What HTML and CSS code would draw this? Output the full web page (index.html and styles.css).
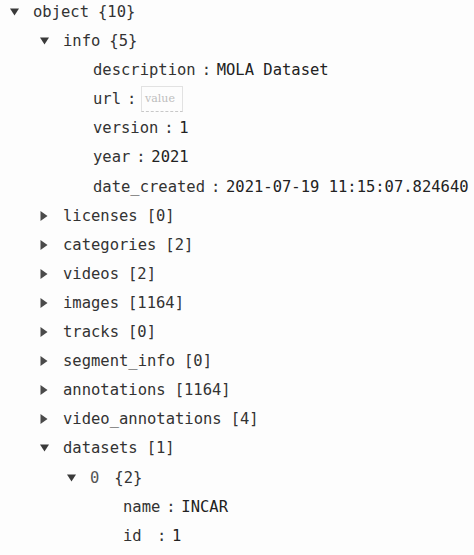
FILE: index.html
```html
<!DOCTYPE html>
<html>
<head>
<meta charset="utf-8">
<link rel="stylesheet" href="styles.css">
</head>
<body>
<div class="tree">
  <div class="node">
    <div class="row"><span class="tog"><svg width="9" height="8" viewBox="0 0 9 8"><polygon points="0,0.5 9,0.5 4.5,7.5" fill="#3a3a3a"/></svg></span><span class="k">object</span><span class="meta">{10}</span></div>
    <div class="kids">
      <div class="node">
        <div class="row"><span class="tog"><svg width="9" height="8" viewBox="0 0 9 8"><polygon points="0,0.5 9,0.5 4.5,7.5" fill="#3a3a3a"/></svg></span><span class="k">info</span><span class="meta">{5}</span></div>
        <div class="kids">
          <div class="row leaf"><span class="k">description</span><span class="c">:</span><span class="v">MOLA Dataset</span></div>
          <div class="row leaf"><span class="k">url</span><span class="c">:</span><span class="ph">value</span></div>
          <div class="row leaf"><span class="k">version</span><span class="c">:</span><span class="v">1</span></div>
          <div class="row leaf"><span class="k">year</span><span class="c">:</span><span class="v">2021</span></div>
          <div class="row leaf"><span class="k">date_created</span><span class="c">:</span><span class="v">2021-07-19 11:15:07.824640</span></div>
        </div>
      </div>
      <div class="row"><span class="tog"><svg width="8" height="10" viewBox="0 0 8 10"><polygon points="0.5,0 7.5,5 0.5,10" fill="#4a4a4a"/></svg></span><span class="k">licenses</span><span class="meta">[0]</span></div>
      <div class="row"><span class="tog"><svg width="8" height="10" viewBox="0 0 8 10"><polygon points="0.5,0 7.5,5 0.5,10" fill="#4a4a4a"/></svg></span><span class="k">categories</span><span class="meta">[2]</span></div>
      <div class="row"><span class="tog"><svg width="8" height="10" viewBox="0 0 8 10"><polygon points="0.5,0 7.5,5 0.5,10" fill="#4a4a4a"/></svg></span><span class="k">videos</span><span class="meta">[2]</span></div>
      <div class="row"><span class="tog"><svg width="8" height="10" viewBox="0 0 8 10"><polygon points="0.5,0 7.5,5 0.5,10" fill="#4a4a4a"/></svg></span><span class="k">images</span><span class="meta">[1164]</span></div>
      <div class="row"><span class="tog"><svg width="8" height="10" viewBox="0 0 8 10"><polygon points="0.5,0 7.5,5 0.5,10" fill="#4a4a4a"/></svg></span><span class="k">tracks</span><span class="meta">[0]</span></div>
      <div class="row"><span class="tog"><svg width="8" height="10" viewBox="0 0 8 10"><polygon points="0.5,0 7.5,5 0.5,10" fill="#4a4a4a"/></svg></span><span class="k">segment_info</span><span class="meta">[0]</span></div>
      <div class="row"><span class="tog"><svg width="8" height="10" viewBox="0 0 8 10"><polygon points="0.5,0 7.5,5 0.5,10" fill="#4a4a4a"/></svg></span><span class="k">annotations</span><span class="meta">[1164]</span></div>
      <div class="row"><span class="tog"><svg width="8" height="10" viewBox="0 0 8 10"><polygon points="0.5,0 7.5,5 0.5,10" fill="#4a4a4a"/></svg></span><span class="k">video_annotations</span><span class="meta">[4]</span></div>
      <div class="node">
        <div class="row"><span class="tog"><svg width="9" height="8" viewBox="0 0 9 8"><polygon points="0,0.5 9,0.5 4.5,7.5" fill="#3a3a3a"/></svg></span><span class="k">datasets</span><span class="meta">[1]</span></div>
        <div class="kids">
          <div class="node">
            <div class="row sub"><span class="tog"><svg width="9" height="8" viewBox="0 0 9 8"><polygon points="0,0.5 9,0.5 4.5,7.5" fill="#3a3a3a"/></svg></span><span class="k idx">0</span><span class="meta wide">{2}</span></div>
            <div class="kids">
              <div class="row leaf"><span class="k">name</span><span class="c">:</span><span class="v">INCAR</span></div>
              <div class="row leaf"><span class="k">id&nbsp;</span><span class="c">:</span><span class="v">1</span></div>
            </div>
          </div>
        </div>
      </div>
    </div>
  </div>
</div>
</body>
</html>
```

FILE: styles.css
```css
html, body {
  margin: 0;
  padding: 0;
  background: #fdfdfd;
}
body {
  padding: 0 8px;
  font-family: "DejaVu Sans Mono", "Liberation Mono", monospace;
  font-size: 15.5px;
  color: #2b2b2b;
}
.tree, .node, .kids {
  display: flex;
  flex-direction: column;
  gap: 5.1px;
}
.kids {
  padding-left: 30px;
}
.row {
  display: flex;
  align-items: center;
  height: 24px;
  white-space: nowrap;
}
.leaf {
  padding-left: 25px;
}
.sub {
  margin-left: -3px;
}
.tog {
  width: 25px;
  flex: none;
  display: flex;
  align-items: center;
  padding-left: 2px;
  box-sizing: border-box;
}
.tog svg {
  display: block;
}
.k {
  color: #333;
}
.idx {
  color: #555;
}
.meta {
  margin-left: 9px;
  color: #333;
}
.meta.wide {
  margin-left: 15px;
}
.c {
  margin: 0 6px;
  color: #333;
  display: inline-block;
  width: 9px;
  text-align: center;
}
.v {
  color: #222;
}
.ph {
  display: inline-block;
  margin-left: -1px;
  height: 26px;
  width: 42px;
  box-sizing: border-box;
  border: 1px solid #e2e2e2;
  border-bottom: 1px dashed #c8c8c8;
  font-family: "DejaVu Serif", "Liberation Serif", serif;
  font-size: 11px;
  color: #bdbdbd;
  line-height: 24px;
  padding-left: 3px;
}
```
